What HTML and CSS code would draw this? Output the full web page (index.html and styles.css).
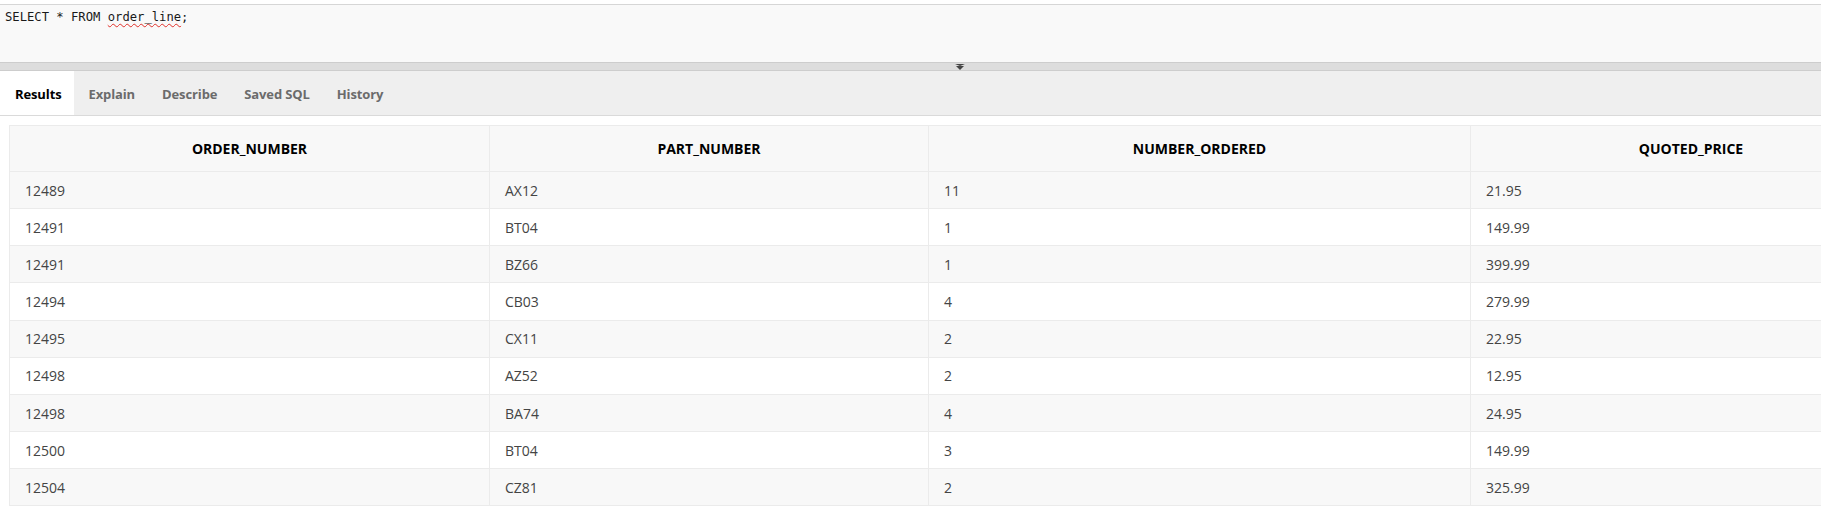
FILE: index.html
```html
<!DOCTYPE html>
<html>
<head>
<meta charset="utf-8">
<link rel="stylesheet" href="styles.css">
</head>
<body>
<div class="app">
  <div class="editor"><span class="kw">SELECT * FROM </span><span class="ident">order_line</span><span class="kw">;</span></div>
  <div class="splitter"><span class="grip"></span></div>
  <div class="tabs">
    <div class="tab active">Results</div>
    <div class="tab">Explain</div>
    <div class="tab">Describe</div>
    <div class="tab">Saved SQL</div>
    <div class="tab">History</div>
  </div>
  <div class="results">
    <table class="grid">
      <colgroup>
        <col class="c1"><col class="c2"><col class="c3"><col class="c4">
      </colgroup>
      <thead>
        <tr><th>ORDER_NUMBER</th><th>PART_NUMBER</th><th>NUMBER_ORDERED</th><th>QUOTED_PRICE</th></tr>
      </thead>
      <tbody>
        <tr><td>12489</td><td>AX12</td><td>11</td><td>21.95</td></tr>
        <tr><td>12491</td><td>BT04</td><td>1</td><td>149.99</td></tr>
        <tr><td>12491</td><td>BZ66</td><td>1</td><td>399.99</td></tr>
        <tr><td>12494</td><td>CB03</td><td>4</td><td>279.99</td></tr>
        <tr><td>12495</td><td>CX11</td><td>2</td><td>22.95</td></tr>
        <tr><td>12498</td><td>AZ52</td><td>2</td><td>12.95</td></tr>
        <tr><td>12498</td><td>BA74</td><td>4</td><td>24.95</td></tr>
        <tr><td>12500</td><td>BT04</td><td>3</td><td>149.99</td></tr>
        <tr><td>12504</td><td>CZ81</td><td>2</td><td>325.99</td></tr>
      </tbody>
    </table>
  </div>
</div>
</body>
</html>
```
FILE: styles.css
```css
html, body {
  margin: 0;
  padding: 0;
  background: #ffffff;
  overflow: hidden;
}

.app {
  width: 1920px;
  font-family: "Open Sans", "Noto Sans", sans-serif;
}

.editor {
  margin-top: 4px;
  height: 58px;
  box-sizing: border-box;
  border-top: 1px solid #d6d6d6;
  background: #f9f9f9;
  padding: 5px 5px 0;
  font-family: "DejaVu Sans Mono", "Liberation Mono", monospace;
  font-size: 12.2px;
  line-height: 15px;
  color: #1a1a1a;
}

.ident {
  text-decoration: underline wavy #e0302a;
  text-decoration-thickness: 1px;
  text-underline-offset: 2px;
}

.splitter {
  height: 9px;
  box-sizing: border-box;
  background: #dddddd;
  border-top: 1px solid #cdcdcd;
  border-bottom: 1px solid #cdcdcd;
  display: flex;
  justify-content: center;
  align-items: flex-start;
}

.grip {
  width: 0;
  height: 0;
  margin-top: 1px;
  border-top: 2px solid #444;
  border-left: 5px solid transparent;
  border-right: 5px solid transparent;
  position: relative;
}

.grip::after {
  content: "";
  position: absolute;
  left: -4px;
  top: 0;
  border-top: 4px solid #444;
  border-left: 4px solid transparent;
  border-right: 4px solid transparent;
}

.tabs {
  height: 45px;
  box-sizing: border-box;
  background: #efefef;
  border-bottom: 1px solid #dadada;
  display: flex;
  align-items: stretch;
}

.tab {
  padding: 2px 12px 0 15px;
  display: flex;
  align-items: center;
  font-size: 13px;
  font-weight: 700;
  color: #6b6b6b;
  letter-spacing: -0.12px;
}

.tab.active {
  background: #ffffff;
  color: #000000;
}

.results {
  padding: 9px 9px 0;
}

.grid {
  width: 1902px;
  table-layout: fixed;
  border-collapse: collapse;
  font-size: 14px;
}

.c1 { width: 480px; }
.c2 { width: 439px; }
.c3 { width: 542px; }
.c4 { width: 441px; }

.grid th {
  height: 46px;
  box-sizing: border-box;
  background: #f8f8f8;
  border: 1px solid #ebebeb;
  font-size: 14px;
  font-weight: 700;
  color: #000000;
  text-align: center;
  padding: 0;
}

.grid td {
  height: 37.17px;
  box-sizing: border-box;
  border: 1px solid #ebebeb;
  padding: 0 15px;
  color: #444444;
  text-align: left;
}

.grid tbody tr:nth-child(odd) td {
  background: #f8f8f8;
}

.grid tbody tr:nth-child(even) td {
  background: #ffffff;
}
```
